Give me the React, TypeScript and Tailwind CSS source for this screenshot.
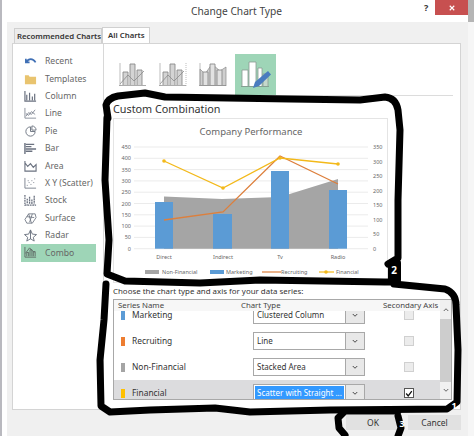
import React from 'react';

const navItems = ['Recent', 'Templates', 'Column', 'Line', 'Pie', 'Bar', 'Area', 'X Y (Scatter)', 'Stock', 'Surface', 'Radar', 'Combo'];

const seriesRows = [
  { name: 'Marketing', type: 'Clustered Column', swatch: 'bg-[#5b9bd5]', checked: false },
  { name: 'Recruiting', type: 'Line', swatch: 'bg-[#ed7d31]', checked: false },
  { name: 'Non-Financial', type: 'Stacked Area', swatch: 'bg-[#a5a5a5]', checked: false },
  { name: 'Financial', type: 'Scatter with Straight ...', swatch: 'bg-[#ffc000]', checked: true },
];

function NavIcon({ name }: { name: string }) {
  const c = '#6b7280';
  let body: React.ReactNode = null;
  switch (name) {
    case 'Recent':
      body = <path d="M2 4v4h4M2.500 7.500C5 3.500 9.500 3 12.500 8" fill="none" stroke="#3f6fb5" strokeWidth="1.800" />;
      break;
    case 'Templates':
      body = <path d="M1 2.500h4l1 1.500h7v8H1z" fill="#e9c46f" />;
      break;
    case 'Column':
      body = <path d="M1 1v11h12M3 5v6M6 3v8M9 7v4M11.500 4v7" fill="none" stroke={c} strokeWidth="1.300" />;
      break;
    case 'Line':
      body = <path d="M1 1v11h12M2 10l3-4 3 2 4-5M2 7l3 2 3-4 4 3" fill="none" stroke={c} strokeWidth="0.800" />;
      break;
    case 'Pie':
      body = <path d="M7 2a5 5 0 1 0 5 5H7zM8.500 1a4.500 4.500 0 0 1 4.500 4.500H8.500z" fill="none" stroke={c} strokeWidth="1" />;
      break;
    case 'Bar':
      body = <path d="M1 1v12M2 2.500h9M2 5h6M2 7.500h11M2 10h7" fill="none" stroke={c} strokeWidth="1.500" />;
      break;
    case 'Area':
      body = <path d="M1 1v11h12V5L10 8 7 4 4 7 1 3" fill="none" stroke={c} strokeWidth="1.200" />;
      break;
    case 'X Y (Scatter)':
      body = <path d="M1 1v11h12M3 9h1M5 6h1M7 8h1M8 4h1M10 6h1M11 2h1M4 4h1" fill="none" stroke={c} strokeWidth="0.900" />;
      break;
    case 'Stock':
      body = <path d="M1 1v11h12M3.500 5v6M6 3v8M8.500 6v5M11 2v9" fill="none" stroke={c} strokeWidth="1.400" strokeDasharray="2 0.700" />;
      break;
    case 'Surface':
      body = <path d="M1 8l4-6h7l1 4-4 6H3zM3 5l8 1M5 2l3 10M9 2L6 11" fill="none" stroke={c} strokeWidth="0.900" />;
      break;
    case 'Radar':
      body = <path d="M7 1l2 4.500 4.500.5-3.500 3 1 4-4-2.500L3 13l1-4-3.500-3L5 5.500zM7 1v10" fill="none" stroke={c} strokeWidth="1" />;
      break;
    case 'Combo':
      body = <path d="M1 1v11h12M3 11V7h2v4M6.500 11V4h2v7M10 11V6h2v5M1.500 8L6 2l5 5" fill="none" stroke="#5f6b66" strokeWidth="1" />;
      break;
  }
  return (
    <svg viewBox="0 0 14 14" className="w-[13px] h-[13px] shrink-0">
      {body}
    </svg>
  );
}

function ComboThumb({ variant }: { variant: number }) {
  return (
    <svg viewBox="0 0 28 24" className="w-[28px] h-[24px]">
      {variant === 2 && <path d="M1 7l5 5 7-10 8 7 6-4v19H1z" fill="#cfcfcf" stroke="#8a8a8a" strokeWidth="0.700" />}
      <path d="M4 23V10h5v13M11 23V2h5v21M18 23V8h5v15" fill={variant === 2 ? '#e2e2e2' : '#d4d4d4'} stroke="#8a8a8a" strokeWidth="0.900" />
      {variant !== 2 && <path d="M1 22l8-9 6 6 10-10" fill="none" stroke="#8a8a8a" strokeWidth="0.800" />}
      <path d="M0 23.500h27" stroke="#8a8a8a" strokeWidth="0.700" />
      <path d="M1 1v23" stroke="#a0a0a0" strokeWidth="0.700" />
      {variant === 1 && <path d="M27 1v23" stroke="#a0a0a0" strokeWidth="0.700" strokeDasharray="1 1" />}
    </svg>
  );
}

function CustomThumb() {
  return (
    <svg viewBox="0 0 32 32" className="w-[32px] h-[32px]">
      <path d="M2 28V12h6v16M9 28V4h7v24M18 28V10h4v18" fill="#fff" stroke="#8b9b93" strokeWidth="0.800" />
      <path d="M23 28V16h5v12" fill="#c5d8cb" stroke="#8b9b93" strokeWidth="0.800" />
      <path d="M1 28.500h28" stroke="#7a8a82" strokeWidth="0.700" />
      <path d="M13 30l2-6L28 13l3 3.500L19 28z" fill="#4a7cbf" />
    </svg>
  );
}

function ChartPreview() {
  const left = ['450', '400', '350', '300', '250', '200', '150', '100', '50', '0'];
  const right = ['350', '300', '250', '200', '150', '100', '50', '0'];
  const label = 'fill-[#666] text-[5.500px]';
  return (
    <svg viewBox="0 0 275 165" className="w-[275px] h-[165px] block">
      <text x="137" y="16" textAnchor="middle" className="fill-[#666] text-[9.500px]">Company Performance</text>
      {left.map((t, i) => (
        <g key={t}>
          <line x1="20" x2="254" y1={28 + i * 11.3} y2={28 + i * 11.3} stroke="#e3e3e3" strokeWidth="0.700" />
          <text x="17" y={30 + i * 11.3} textAnchor="end" className={label}>{t}</text>
        </g>
      ))}
      {right.map((t, i) => (
        <text key={t} x="259" y={30 + i * 14.5} className={label}>{t}</text>
      ))}
      <path d="M50 77.500 L108 80 L166 78 L224 60 V129.700 H50 Z" fill="#a5a5a5" />
      <rect x="41" y="83" width="18" height="46.700" fill="#5b9bd5" />
      <rect x="99" y="95" width="19" height="34.700" fill="#5b9bd5" />
      <rect x="157" y="52" width="18" height="77.700" fill="#5b9bd5" />
      <rect x="215" y="71" width="18" height="58.700" fill="#5b9bd5" />
      <polyline points="50,101 109,93 166,37 224,65" fill="none" stroke="#dd7f3c" strokeWidth="1.300" />
      <polyline points="50,42 109,69 166,39 224,45" fill="none" stroke="#f3b91a" strokeWidth="1.300" />
      {[[50, 42], [109, 69], [166, 39], [224, 45]].map(([x, y]) => (
        <circle key={x} cx={x} cy={y} r="1.800" fill="#f3b91a" />
      ))}
      <text x="50" y="140" textAnchor="middle" className={label}>Direct</text>
      <text x="109" y="140" textAnchor="middle" className={label}>Indirect</text>
      <text x="166" y="140" textAnchor="middle" className={label}>Tv</text>
      <text x="224" y="140" textAnchor="middle" className={label}>Radio</text>
      <rect x="31" y="151" width="14" height="4" fill="#a5a5a5" />
      <text x="48" y="155" className={label}>Non-Financial</text>
      <rect x="96" y="151" width="14" height="4" fill="#5b9bd5" />
      <text x="112" y="155" className={label}>Marketing</text>
      <line x1="148" x2="167" y1="153" y2="153" stroke="#dd7f3c" strokeWidth="1.200" />
      <text x="167" y="155" className={label}>Recruiting</text>
      <line x1="205" x2="220" y1="153" y2="153" stroke="#f3b91a" strokeWidth="1.200" />
      <circle cx="212" cy="153" r="1.800" fill="#f3b91a" />
      <text x="222" y="155" className={label}>Financial</text>
    </svg>
  );
}

function SeriesTable() {
  return (
    <div className="relative w-[339px] h-[101px] border border-[#a8a8a8] bg-white overflow-hidden flex">
      <div className="w-[327px] flex flex-col">
        <div className="relative z-10 h-[11px] bg-[#f7f7f7] flex items-center text-[7.800px] text-[#444] whitespace-nowrap">
          <span className="ml-[4px] w-[123px]">Series Name</span>
          <span className="w-[142px]">Chart Type</span>
          <span>Secondary Axis</span>
        </div>
        <div className="-mt-[9px] flex flex-col">
          {seriesRows.map((r, i) => (
            <div key={r.name} className={`h-[26px] flex items-center shrink-0 ${i === 3 ? 'bg-[#dcdcde]' : ''}`}>
              <span className={`ml-[7px] w-[4px] h-[9px] ${r.swatch}`} />
              <span className="ml-[7px] w-[121px] text-[8.400px] text-[#333]">{r.name}</span>
              <div className="w-[112px] h-[18px] border border-[#a8a8a8] bg-white flex items-stretch">
                <span className={`flex-1 text-[8px] leading-[14px] px-[2px] m-[1px] whitespace-nowrap overflow-hidden ${i === 3 ? 'bg-[#3399ff] text-white' : 'text-[#333]'}`}>{r.type}</span>
                <span className="w-[19px] bg-[#e8e8e8] border-l border-[#a8a8a8] flex items-center justify-center">
                  <svg viewBox="0 0 8 6" className="w-[6px] h-[5px]">
                    <path d="M1 1l3 3 3-3" fill="none" stroke="#444" strokeWidth="1.300" />
                  </svg>
                </span>
              </div>
              <span className={`ml-[39px] w-[10px] h-[10px] border flex items-center justify-center ${r.checked ? 'border-[#555] bg-white' : 'border-[#d0d0d0] bg-[#ececec]'}`}>
                {r.checked && (
                  <svg viewBox="0 0 10 10" className="w-[9px] h-[9px]">
                    <path d="M1.500 5l2.500 3 4.500-6" fill="none" stroke="#111" strokeWidth="1.600" />
                  </svg>
                )}
              </span>
            </div>
          ))}
        </div>
      </div>
      <div className="w-[11px] flex flex-col bg-[#f0f0f0]">
        <div className="h-[19px] flex items-center justify-center">
          <svg viewBox="0 0 8 6" className="w-[6px] h-[5px]"><path d="M1 5l3-3 3 3" fill="none" stroke="#555" strokeWidth="1.200" /></svg>
        </div>
        <div className="h-[63px] bg-[#cdcdcd]" />
        <div className="flex-1 flex items-center justify-center">
          <svg viewBox="0 0 8 6" className="w-[6px] h-[5px]"><path d="M1 1l3 3 3-3" fill="none" stroke="#555" strokeWidth="1.200" /></svg>
        </div>
      </div>
    </div>
  );
}

export default function App() {
  return (
    <div className="relative w-[474px] h-[436px] overflow-hidden bg-white flex font-['Noto_Sans',sans-serif]">
      <div className="w-[7px] flex shrink-0">
        <div className="w-[2px] bg-[#b9b9bf]" />
      </div>

      <div className="w-[461px] flex flex-col bg-[#f0f0f0]">
        {/* title bar */}
        <div className="h-[22px] bg-white flex items-start shrink-0">
          <span className="ml-[184px] mt-[3px] w-[91px] text-[10.200px] leading-[17px] text-[#444] whitespace-nowrap">Change Chart Type</span>
          <span className="ml-[142px] w-[6px] mt-[1px] text-[9px] font-bold leading-[14px] text-[#333]">?</span>
          <div className="ml-[5px] w-[33px] h-[15px] bg-[#c75050] flex items-center justify-center text-white">
            <svg viewBox="0 0 8 8" className="w-[6px] h-[6px]"><path d="M1 1l6 6M7 1L1 7" stroke="#fff" strokeWidth="1.500" /></svg>
          </div>
        </div>

        {/* tabs */}
        <div className="h-[21px] flex items-end pl-[7px] shrink-0">
          <div className="h-[15px] w-[88px] bg-[#ececec] border border-b-0 border-[#d0d0d0] text-[7.800px] leading-[14px] font-semibold text-[#333] pl-[2px] whitespace-nowrap">Recommended Charts</div>
          <div className="h-[16px] w-[48px] bg-white border border-b-0 border-[#d0d0d0] text-[7.800px] leading-[14px] font-semibold text-[#333] pl-[5px] whitespace-nowrap">All Charts</div>
        </div>

        {/* panel */}
        <div className="ml-[5px] w-[449px] h-[367px] bg-white border border-[#d4d4d4] flex shrink-0">
          <div className="w-[91px] border-r border-[#d8d8d8] pt-[9px] pl-[8px] pr-[7px] shrink-0">
            {navItems.map((n) => (
              <div key={n} className={`h-[17.400px] flex items-center pl-[3px] whitespace-nowrap ${n === 'Combo' ? 'bg-[#9ed5b7]' : ''}`}>
                <NavIcon name={n} />
                <span className="ml-[8px] text-[8.600px] text-[#666]">{n}</span>
              </div>
            ))}
          </div>

          <div className="flex-1 flex flex-col pl-[9px]">
            <div className="h-[52px] flex items-center border-b border-[#dcdcdc] w-[340px] shrink-0 pt-[9px]">
              <div className="ml-[6px]"><ComboThumb variant={0} /></div>
              <div className="ml-[12px]"><ComboThumb variant={1} /></div>
              <div className="ml-[12px]"><ComboThumb variant={2} /></div>
              <div className="ml-[8px] w-[41px] h-[41px] bg-[#9ed5b7] flex items-center justify-center"><CustomThumb /></div>
            </div>
            <div className="mt-[4px] text-[10.800px] leading-[18px] text-[#333] whitespace-nowrap">Custom Combination</div>
            <div className="w-[275px] h-[165px] border border-[#e4e4e4]"><ChartPreview /></div>
            <div className="mt-[1px] h-[14px] flex items-end text-[7.900px] leading-[14px] text-[#333] whitespace-nowrap">Choose the chart type and axis for your data series:</div>
            <div className="mt-[1px]"><SeriesTable /></div>
          </div>
        </div>

        {/* footer */}
        <div className="flex justify-end gap-[8px] pt-[5px] pr-[7px]">
          <div className="w-[54px] h-[15px] bg-[#e1e1e1] text-center text-[8.500px] leading-[15px] text-[#333]">OK</div>
          <div className="w-[53px] h-[15px] bg-[#e1e1e1] text-center text-[8.500px] leading-[15px] text-[#333]">Cancel</div>
        </div>
      </div>

      <div className="w-[6px] flex flex-col shrink-0">
        <div className="h-[22px] bg-[#b5b5b5]" />
        <div className="flex-1 bg-[#f6f6f6]" />
      </div>

      {/* hand drawn marks over the dialog */}
      <svg viewBox="0 0 474 436" className="absolute inset-0 w-[474px] h-[436px] pointer-events-none">
        <g fill="none" stroke="#000" strokeWidth="7" strokeLinecap="round" strokeLinejoin="round">
          <path d="M108 118 L106 105 Q108 98 118 96 L145 93 L165 97 L290 99 L360 100 L385 97 Q396 98 398 110 L400 130 L398 200 L398 258 L388 264" />
          <path d="M107 118 L105 180 L109 240 L107 274 L125 281 L200 283 L260 280 L385 282 L396 282" />
          <path d="M394 284 L445 289 Q456 293 456 305 L458 350 L457 402 L447 409 L330 410 L250 412 L215 408 L150 410 L110 412 L101 406 L100 360 L104 320 L106 284" />
          <path d="M398 411 L345 411 L338 418 L339 428 L345 435" />
          <path d="M398 416 L401 428 L398 436" />
        </g>
        <rect x="388" y="259" width="13" height="25" rx="4" fill="#000" />
        <text x="394" y="274" textAnchor="middle" className="fill-white text-[10px] font-bold">2</text>
        <text x="454" y="409" textAnchor="middle" className="fill-white text-[9px] font-bold">1</text>
        <text x="402" y="427" textAnchor="middle" className="fill-white text-[9px] font-bold">3</text>
      </svg>
    </div>
  );
}
